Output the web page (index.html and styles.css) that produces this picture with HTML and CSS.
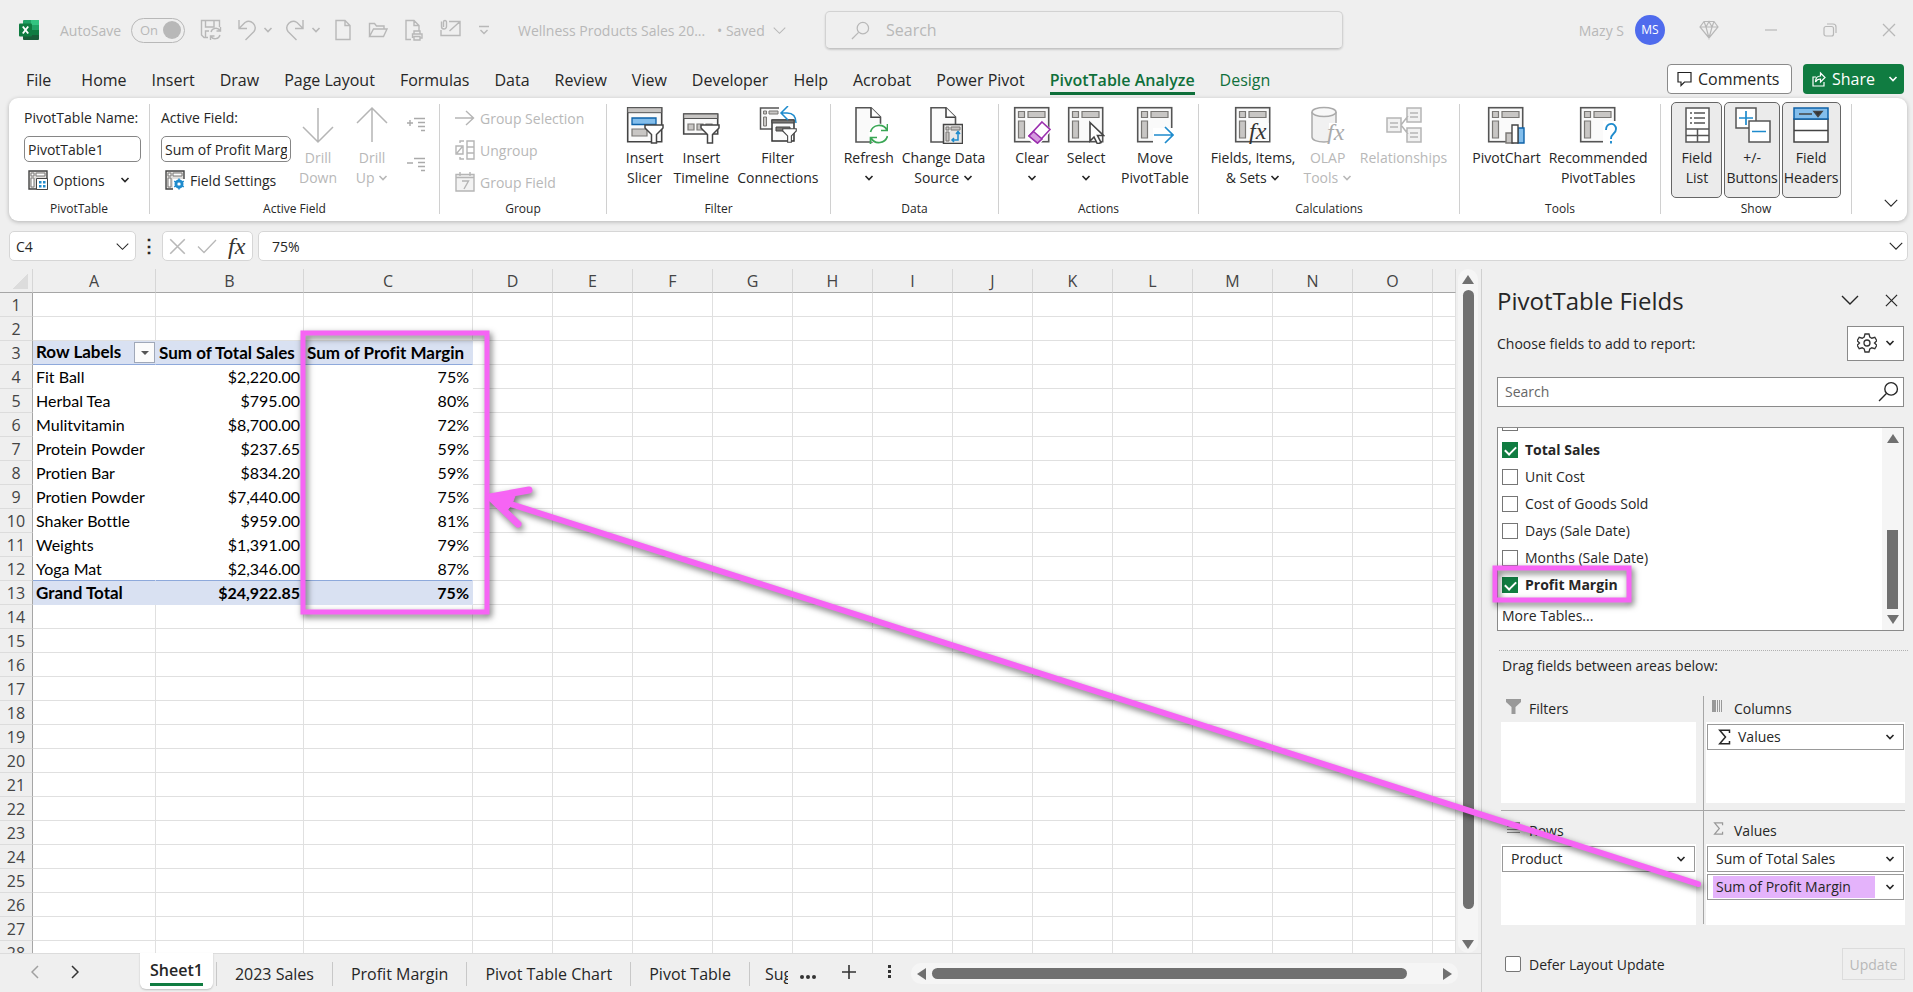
FILE: index.html
```html
<!DOCTYPE html>
<html lang="en">
<head>
    <meta charset="UTF-8">
    <meta name="viewport" content="width=device-width, initial-scale=1.0">
    <title>Wellness Products Sales - Excel</title>
    <link rel="stylesheet" href="styles.css">
</head>
<body>

<!-- Shared icons -->
<svg class="icon-defs" aria-hidden="true">
    <symbol id="chev" viewBox="0 0 10 10"><path d="M1.5 3L5 6.5L8.5 3" fill="none" stroke="currentColor" stroke-width="1.6"/></symbol>
    <symbol id="chev-big" viewBox="0 0 18 18"><path d="M1 5l8 8l8-8" fill="none" stroke="currentColor" stroke-width="1.4"/></symbol>
    <symbol id="pivot" viewBox="0 0 38 38">
        <rect x="1.7" y="1.7" width="34" height="34" fill="#fafafa" stroke="#555" stroke-width="1.6"/>
        <path d="M5.5 5.5h6v6h-6zM15 5.5h17v6H15zM5.5 15h6v17h-6z" fill="#c8c6c4" stroke="#797774" stroke-width="1.2"/>
    </symbol>
    <symbol id="funnel" viewBox="0 0 20 20">
        <path d="M1 1h18v3l-6.500 6.500V19h-5v-8.500L1 4z" fill="#fff" stroke="#444" stroke-width="1.500"/>
    </symbol>
    <symbol id="magnifier" viewBox="0 0 20 20">
        <circle cx="12.500" cy="7.500" r="6" fill="none" stroke="currentColor" stroke-width="1.300"/>
        <path d="M8 12L1 19" stroke="currentColor" stroke-width="1.300"/>
    </symbol>
    <symbol id="cross" viewBox="0 0 14 14"><path d="M1 1l12 12M13 1L1 13" stroke="currentColor" stroke-width="1.300"/></symbol>
    <symbol id="sigma" viewBox="0 0 12 16"><path d="M11 4V1.200H1.200L7 8l-5.800 6.800H11V12" fill="none" stroke="currentColor" stroke-width="1.500"/></symbol>
    <symbol id="page" viewBox="0 0 38 38"><path d="M6 1.700h15l9.500 9.500V36H6z" fill="#fafafa" stroke="#555" stroke-width="1.600"/><path d="M21 1.700v9.500h9.500" fill="#fff" stroke="#444" stroke-width="1.600"/></symbol>
</svg>

<!-- Title bar -->
<header class="title-bar">
    <div class="quick-access">
        <svg class="logo" viewBox="0 0 20 20">
            <path d="M5 0h14a1 1 0 0 1 1 1v4H4V1a1 1 0 0 1 1-1z" fill="#21a366"/><path d="M12 0h7a1 1 0 0 1 1 1v4h-8z" fill="#33c481"/>
            <path d="M4 5h8v5H4z" fill="#107c41"/><path d="M12 5h8v5h-8z" fill="#21a366"/>
            <path d="M4 10h16v9a1 1 0 0 1-1 1H5a1 1 0 0 1-1-1z" fill="#185c37"/><path d="M12 10h8v5h-8z" fill="#107c41"/>
            <rect y="3.500" width="13" height="13" rx="1" fill="#107c41"/>
            <path d="M3.800 6.500l5.400 7M9.200 6.500l-5.400 7" stroke="#fff" stroke-width="1.900"/>
        </svg>
        <span class="autosave">AutoSave</span>
        <button class="toggle" aria-label="AutoSave on">On<span class="knob"></span></button>
        <button class="qa save" aria-label="Save"><svg width="22" height="22" viewBox="0 0 22 22"><path d="M8 18.500H4L1.500 16V1.500h18V8M5.500 1.500V8H14V1.500M5.500 18.500V12H9M11 13a5 5 0 0 1 9-1.500M20.500 8v4h-4M20 16a5 5 0 0 1-9 1.500M10.500 21v-4h4"/></svg></button>
        <button class="qa undo" aria-label="Undo"><svg width="20" height="22" viewBox="0 0 20 22"><path d="M2 1v8.500h8M2.500 9L8 3.500a6.500 6.500 0 0 1 9 9L8.500 21"/></svg><svg class="chev"><use href="#chev"/></svg></button>
        <button class="qa redo" aria-label="Redo"><svg width="20" height="22" viewBox="0 0 20 22"><path d="M18 1v8.500h-8M17.500 9L12 3.500a6.500 6.500 0 0 0-9 9L11.500 21"/></svg><svg class="chev"><use href="#chev"/></svg></button>
        <button class="qa new" aria-label="New"><svg width="16" height="22" viewBox="0 0 16 22"><path d="M1 1.500h9l5 5v14H1zM10 1.500v5h5"/></svg></button>
        <button class="qa open" aria-label="Open"><svg width="20" height="22" viewBox="0 0 20 22"><path d="M1.500 17V4.500h5l2 2.500H16v3M1.500 17.500l4-7.500H19l-3.500 7.500z"/></svg></button>
        <button class="qa print" aria-label="Quick print"><svg width="18" height="22" viewBox="0 0 18 22"><path d="M6 20.500H1v-19h8l5 5V12M9 1.500v5h5M9 15v-3h6v3M7.500 19v-4h9.500v4h-2M9 17.500h6v3.500H9z"/></svg></button>
        <button class="qa mail" aria-label="Email"><svg width="21" height="22" viewBox="0 0 21 22"><path d="M9 2.500h11v14H1V11M20 2.500L9.500 12M1.500 2.500v5a2.500 2.500 0 0 0 5 0V3a1.500 1.500 0 0 0-3 0v5"/></svg></button>
        <button class="qa more" aria-label="Customize"><svg width="10" height="10" viewBox="0 0 10 10"><path d="M0 1.500h10M1.500 5L5 8.500L8.500 5"/></svg></button>
        <span class="doc-name">Wellness Products Sales 20...</span>
        <span class="doc-state">• Saved</span>
        <svg class="chev-saved"><use href="#chev-big"/></svg>
    </div>
    <label class="top-search">
        <svg><use href="#magnifier"/></svg>
        <input type="text" placeholder="Search">
    </label>
    <div class="window-tools">
        <span>Mazy S</span>
        <span class="avatar">MS</span>
        <button class="wt" aria-label="Premium"><svg width="20" height="20" viewBox="0 0 20 20"><path d="M5 1.500h10l4 5.500l-9 11L1 7zM1 7h18M5 1.500L7 7l3 11l3-11l2-5.500M7 7l3-5.500L13 7"/></svg></button>
        <button class="wt" aria-label="Minimize"><svg width="14" height="14" viewBox="0 0 14 14"><path d="M1 7h12"/></svg></button>
        <button class="wt" aria-label="Restore"><svg width="14" height="14" viewBox="0 0 14 14"><rect x="1" y="3.500" width="9.500" height="9.500" rx="2"/><path d="M4 1h6a3 3 0 0 1 3 3v6"/></svg></button>
        <button class="wt" aria-label="Close"><svg width="14" height="14"><use href="#cross"/></svg></button>
    </div>
</header>

<!-- Ribbon tabs -->
<nav class="ribbon-tabs">
    <a href="#">File</a>
    <a href="#">Home</a>
    <a href="#">Insert</a>
    <a href="#">Draw</a>
    <a href="#">Page Layout</a>
    <a href="#">Formulas</a>
    <a href="#">Data</a>
    <a href="#">Review</a>
    <a href="#">View</a>
    <a href="#">Developer</a>
    <a href="#">Help</a>
    <a href="#">Acrobat</a>
    <a href="#">Power Pivot</a>
    <a href="#" class="active">PivotTable Analyze</a>
    <a href="#" class="context">Design</a>
    <button class="comments"><svg width="15" height="16" viewBox="0 0 15 16" fill="none" stroke="#222" stroke-width="1.200"><path d="M1 1.500h13v9.500H7.500L4 14.500V11H1z"/></svg>Comments</button>
    <button class="share"><svg width="14" height="16" viewBox="0 0 14 16" fill="none" stroke="#fff" stroke-width="1.200"><path d="M4 6H1v9h11v-4M3.500 11c0-4 2-6 5-6V2l4.500 4.500L8.500 11V8c-2.500 0-4 1-5 3z"/></svg>Share<svg class="chev"><use href="#chev"/></svg></button>
</nav>

<!-- Ribbon -->
<section class="ribbon">
    <div class="group">
        <div class="group-body">
            <div class="stack">
                <label for="ptName">PivotTable Name:</label>
                <input type="text" id="ptName" class="ribbon-input name" value="PivotTable1">
                <button class="small indent"><svg width="20" height="20" viewBox="0 0 20 20"><path d="M1 1h18v18H1z" fill="#e1dfdd" stroke="#444" stroke-width="1.400"/><path d="M3 3h3v3H3zM8 3h9v3H8zM3 8h3v9H3z" fill="#fff" stroke="#797774"/><path d="M8.500 8.500h11v11h-11z" fill="#fff" stroke="#444"/><path d="M11 11h2.500v2.500H11zM15 11h2.500v2.500H15zM11 15h2.500v2.500H11zM15 15h2.500v2.500H15z" fill="#1e8bcd"/></svg>Options<svg class="chev apart"><use href="#chev"/></svg></button>
            </div>
        </div>
        <div class="group-name">PivotTable</div>
    </div>
    <div class="group">
        <div class="group-body">
            <div class="stack">
                <label for="activeField">Active Field:</label>
                <input type="text" id="activeField" class="ribbon-input field" value="Sum of Profit Margin">
                <button class="small indent"><svg width="20" height="20" viewBox="0 0 20 20"><path d="M1 1h18v18H1z" fill="#e1dfdd" stroke="#444" stroke-width="1.400"/><path d="M3 3h3v3H3zM8 3h9v3H8zM3 8h3v9H3z" fill="#fff" stroke="#797774"/><path d="M8 9h12v11H8z" fill="#fff"/><circle cx="14" cy="14" r="3.300" fill="none" stroke="#1e8bcd" stroke-width="2.400"/><path d="M14 8.500v11M9.200 11.200l9.600 5.600M9.200 16.800l9.600-5.600" stroke="#1e8bcd" stroke-width="1.500"/><circle cx="14" cy="14" r="1.600" fill="#fff"/></svg>Field Settings</button>
            </div>
            <button class="big drill" disabled><svg width="38" height="38" viewBox="0 0 38 38" fill="none" stroke="#b5b5b5" stroke-width="1.500"><path d="M19 2v34M4 21l15 15l15-15"/></svg>Drill<br>Down</button>
            <button class="big drill" disabled><svg width="38" height="38" viewBox="0 0 38 38" fill="none" stroke="#b5b5b5" stroke-width="1.500"><path d="M19 36V2M4 17L19 2l15 15"/></svg>Drill<br>Up <svg class="chev"><use href="#chev"/></svg></button>
            <div class="expand">
                <button disabled aria-label="Expand field"><svg width="18" height="16" viewBox="0 0 18 16" stroke="#aaa" stroke-width="1.400"><path d="M0 6h6M3 3v6M7 1.500h11M11 5.500h7M11 9.500h7M14 13.500h4"/></svg></button>
                <button disabled aria-label="Collapse field"><svg width="18" height="16" viewBox="0 0 18 16" stroke="#aaa" stroke-width="1.400"><path d="M0 6h6M7 1.500h11M11 5.500h7M11 9.500h7M14 13.500h4"/></svg></button>
            </div>
        </div>
        <div class="group-name">Active Field</div>
    </div>
    <div class="group">
        <div class="group-body wide">
            <div class="stack">
                <button class="small" disabled><svg width="20" height="20" viewBox="0 0 20 20" fill="none" stroke="#b5b5b5" stroke-width="1.400"><path d="M0 10h18M11 3l7.500 7l-7.500 7"/></svg>Group Selection</button>
                <button class="small" disabled><svg width="20" height="20" viewBox="0 0 20 20" fill="none" stroke="#b5b5b5" stroke-width="1.400"><path d="M1 6h7v8H1zM2 13l5-6M5 3V1h4M5 17v2h4M12 1h7v18h-7zM12 7h7M12 13h7"/></svg>Ungroup</button>
                <button class="small" disabled><svg width="20" height="20" viewBox="0 0 20 20" fill="#f3f3f3" stroke="#b5b5b5" stroke-width="1.400"><path d="M1 2.500h18V19H1zM1 5.500h18M5 0v4M15 0v4M7 9h6.500L9 17"/></svg>Group Field</button>
            </div>
        </div>
        <div class="group-name">Group</div>
    </div>
    <div class="group">
        <div class="group-body centered nudge">
            <button class="big mid"><svg width="38" height="38" viewBox="0 0 38 38"><path d="M1.700 1.700h34v34h-34z" fill="#fafafa" stroke="#444" stroke-width="1.600"/><path d="M1.700 1.700h34v5h-34z" fill="#c8c6c4" stroke="#555"/><path d="M6 12h24v6.500H6z" fill="#83beec" stroke="#0e62a8" stroke-width="1.300"/><path d="M6 23h15v7H6z" fill="#c8c6c4" stroke="#797774" stroke-width="1.200"/><use href="#funnel" x="18" y="18" width="20" height="20"/></svg>Insert<br>Slicer</button>
            <button class="big"><svg width="38" height="38" viewBox="0 0 38 38"><path d="M1.700 8h34v20h-34z" fill="#fafafa" stroke="#444" stroke-width="1.600"/><path d="M1.700 8h34v4.500h-34z" fill="#c8c6c4" stroke="#555"/><path d="M6 18h6v6H6zM15 18h6v6h-6zM24 18h6v6h-6z" fill="#c8c6c4" stroke="#797774" stroke-width="1.200"/><use href="#funnel" x="18" y="18" width="20" height="20"/></svg>Insert<br>Timeline</button>
            <button class="big"><svg width="38" height="38" viewBox="0 0 38 38"><path d="M1.500 2h22v21h-22z" fill="#fafafa" stroke="#555" stroke-width="1.500"/><path d="M4.500 5h3v3h-3zM10 5h9v3h-9zM4.500 11h3v9h-3z" fill="#c8c6c4" stroke="#797774"/><path d="M20 0h18v14H20z" fill="#fff"/><path d="M13 14h22v21H13z" fill="#fafafa" stroke="#333" stroke-width="1.500"/><path d="M13 14h22v3H13zM17 21h14v4H17z" fill="#797774" stroke="#444"/><path d="M29 0l-7 7l7 7M22 7h6c6 0 9 4 9 10" fill="none" stroke="#1e8bcd" stroke-width="1.500"/><use href="#funnel" x="23" y="22" width="15" height="15"/></svg>Filter<br>Connections</button>
        </div>
        <div class="group-name">Filter</div>
    </div>
    <div class="group">
        <div class="group-body centered">
            <button class="big"><svg width="38" height="38"><use href="#page"/><circle cx="29" cy="28" r="10.500" fill="#fff"/><path d="M20.500 26a9 9 0 0 1 16.500-2M37.500 18v6.500H31M37.500 30a9 9 0 0 1-16.500 2M20.500 38v-6.500H27" fill="none" stroke="#3aa655" stroke-width="1.700"/></svg>Refresh<br><svg class="chev"><use href="#chev"/></svg></button>
            <button class="big"><svg width="38" height="38"><use href="#page"/><path d="M18.500 18.500h19v19h-19z" fill="#e9e8e7" stroke="#444" stroke-width="1.500"/><path d="M21 21h3v3h-3zM26 21h9v3h-9zM21 26h3v9h-3z" fill="#c8c6c4" stroke="#797774"/><path d="M33 25v9h-6M31 28l2-2.500l2 2.500M29 32l-2 2l2 2" fill="none" stroke="#1e8bcd" stroke-width="1.500"/></svg>Change Data<br>Source <svg class="chev"><use href="#chev"/></svg></button>
        </div>
        <div class="group-name">Data</div>
    </div>
    <div class="group">
        <div class="group-body centered nudge">
            <button class="big"><svg width="38" height="38"><use href="#pivot"/><path d="M27 13l12 11l-12 14h-7l-7-7z" fill="#fff"/><path d="M29 16l8 7.500L24.500 37L16 30z" fill="#fff" stroke="#9b2fae" stroke-width="1.600"/><path d="M20.500 25.500l8.500 7.500l-4.500 4L16 30z" fill="#d59adf" stroke="#9b2fae" stroke-width="1.600"/></svg>Clear<br><svg class="chev"><use href="#chev"/></svg></button>
            <button class="big wider"><svg width="38" height="38"><use href="#pivot"/><path d="M23 16.500l13.500 13h-6l3.500 7l-3.500 1.500l-3.500-7l-4 4z" fill="#fff" stroke="#444" stroke-width="1.600"/></svg>Select<br><svg class="chev"><use href="#chev"/></svg></button>
            <button class="big"><svg width="38" height="38"><use href="#pivot"/><path d="M17 22h21v15H17z" fill="#fff"/><path d="M18 29h19M29 21l8 8l-8 8" fill="none" stroke="#1e8bcd" stroke-width="1.700"/></svg>Move<br>PivotTable</button>
        </div>
        <div class="group-name">Actions</div>
    </div>
    <div class="group">
        <div class="group-body centered">
            <button class="big"><svg width="38" height="38"><use href="#pivot"/><path d="M16 17h19v18H16z" fill="#fafafa"/><text x="15" y="33" class="fx">fx</text></svg>Fields, Items,<br>&amp; Sets <svg class="chev"><use href="#chev"/></svg></button>
            <button class="big" disabled><svg width="38" height="38" viewBox="0 0 38 38"><path d="M3 6v25c0 3 5 5 12 5s12-2 12-5V6" fill="#f1f1f1" stroke="#aaa" stroke-width="1.500"/><ellipse cx="15" cy="6" rx="12" ry="4.500" fill="#f8f8f8" stroke="#aaa" stroke-width="1.500"/><path d="M20 17h14v21H20z" fill="#fff"/><text x="18" y="34" class="fx gray">fx</text></svg>OLAP<br>Tools <svg class="chev"><use href="#chev"/></svg></button>
            <button class="big" disabled><svg width="38" height="38" viewBox="0 0 38 38" fill="#f1f1f1" stroke="#b5b5b5" stroke-width="1.500"><path d="M16 19l7-9M16 19l7 9M2 12h14v14H2zM22 2h14v14H22zM22 22h14v14H22zM5 17h8M5 21h8M25 7h8M25 11h8M25 27h8M25 31h8"/></svg>Relationships</button>
        </div>
        <div class="group-name">Calculations</div>
    </div>
    <div class="group">
        <div class="group-body centered">
            <button class="big"><svg width="38" height="38"><use href="#pivot"/><path d="M19 27h7v10h-7z" fill="#c8c6c4" stroke="#797774" stroke-width="1.400"/><path d="M31 22h6v15h-6z" fill="#83beec" stroke="#0e62a8" stroke-width="1.400"/><path d="M25 19h6v18h-6z" fill="#fff" stroke="#444" stroke-width="1.400"/></svg>PivotChart</button>
            <button class="big"><svg width="38" height="38"><use href="#pivot"/><path d="M24 15h14v23H24z" fill="#fff"/><path d="M27 24c0-8 10-8 10-1c0 5-5 4-5 10M32 35v2.500" fill="none" stroke="#1e8bcd" stroke-width="1.900"/></svg>Recommended<br>PivotTables</button>
        </div>
        <div class="group-name">Tools</div>
    </div>
    <div class="group">
        <div class="group-body centered">
            <button class="big pressed"><svg width="38" height="38" viewBox="0 0 38 38" fill="#fff" stroke="#555" stroke-width="1.500"><path d="M8 2h23v34H8zM8 23h23M8 29.500h23M19.500 23v13"/><path d="M12 7h2M16 7h11M12 12h2M16 12h11M12 17h2M16 17h11"/></svg>Field<br>List</button>
            <button class="big pressed"><svg width="38" height="38" viewBox="0 0 38 38" fill="#fff" stroke="#555" stroke-width="1.500"><path d="M3 2h20v20H3z"/><path d="M16 15h21v21H16z"/><path d="M6 12h14M13 5v14M19 25.500h14" stroke="#1e8bcd" stroke-width="1.700"/></svg>+/-<br>Buttons</button>
            <button class="big pressed"><svg width="38" height="38" viewBox="0 0 38 38" fill="#fff" stroke="#444" stroke-width="1.500"><path d="M2 13h34v23H2zM2 24.500h34"/><path d="M2 2h34v11H2z" fill="#83beec" stroke="#0e62a8"/><path d="M7 8h13"/><path d="M22 5.500h8L26 10.500z" fill="#333"/></svg>Field<br>Headers</button>
        </div>
        <div class="group-name">Show</div>
    </div>
    <button class="collapse" aria-label="Collapse ribbon"><svg width="14" height="14"><use href="#chev-big"/></svg></button>
</section>

<!-- Formula bar -->
<div class="formula-bar">
    <div class="name-box">
        <input type="text" value="C4" aria-label="Name box">
        <svg width="13" height="13"><use href="#chev-big"/></svg>
    </div>
    <span class="dots">⋮</span>
    <div class="fx-box">
        <svg width="17" height="17"><use href="#cross"/></svg>
        <svg width="20" height="15" viewBox="0 0 20 15"><path d="M1 7.500l6 6L19 1" fill="none" stroke="currentColor" stroke-width="1.300"/></svg>
        <button aria-label="Insert function">fx</button>
    </div>
    <div class="formula">
        <input type="text" value="75%" aria-label="Formula">
        <svg width="14" height="14"><use href="#chev-big"/></svg>
    </div>
</div>

<main class="workspace">
    <section class="sheet">
        <div class="sheet-top">
            <div class="grid-wrap">
                <table class="grid">
                    <colgroup>
                        <col class="c-head"><col class="c-a"><col class="c-b"><col class="c-c">
                        <col class="c-std"><col class="c-std"><col class="c-std"><col class="c-std"><col class="c-std"><col class="c-std">
                        <col class="c-std"><col class="c-std"><col class="c-std"><col class="c-std"><col class="c-std"><col class="c-std"><col>
                    </colgroup>
                    <thead><tr id="colHeads"></tr></thead>
                    <tbody id="gridBody"></tbody>
                </table>
            </div>
            <div class="v-scroll"><span class="arrow up"></span><span class="thumb"></span><span class="arrow down"></span></div>
        </div>
        <div class="sheet-tabs">
            <button class="nav" aria-label="Previous sheet"><svg width="8" height="14" viewBox="0 0 8 14"><path d="M7 1L1 7l6 6" fill="none" stroke="#a0a0a0" stroke-width="1.500"/></svg></button>
            <button class="nav next" aria-label="Next sheet"><svg width="8" height="14" viewBox="0 0 8 14"><path d="M1 1l6 6l-6 6" fill="none" stroke="#333" stroke-width="1.500"/></svg></button>
            <a href="#" class="tab current"><span>Sheet1</span></a>
            <a href="#" class="tab">2023 Sales</a>
            <a href="#" class="tab">Profit Margin</a>
            <a href="#" class="tab">Pivot Table Chart</a>
            <a href="#" class="tab">Pivot Table</a>
            <a href="#" class="tab cut">Sug</a>
            <button class="tab-btn" aria-label="More sheets"><svg width="16" height="4" fill="#333"><circle cx="2" cy="2" r="2"/><circle cx="8" cy="2" r="2"/><circle cx="14" cy="2" r="2"/></svg></button>
            <button class="tab-btn" aria-label="New sheet"><svg width="14" height="14"><path d="M7 0v14M0 7h14" stroke="#333" stroke-width="1.600"/></svg></button>
            <button class="tab-btn" aria-label="Resize"><svg width="4" height="14" fill="#333"><path d="M0 0h3v3H0zM0 5h3v3H0zM0 10h3v3H0z"/></svg></button>
            <div class="h-scroll"><span class="arrow left"></span><span class="thumb"></span><span class="arrow right"></span></div>
        </div>
    </section>

    <!-- PivotTable Fields pane -->
    <aside class="pane">
        <div class="pane-head">
            <h2>PivotTable Fields</h2>
            <button aria-label="Pane options"><svg width="18" height="18"><use href="#chev-big"/></svg></button>
            <button aria-label="Close pane"><svg width="13" height="13"><use href="#cross"/></svg></button>
        </div>
        <div class="choose">
            <span>Choose fields to add to report:</span>
            <button class="gear" aria-label="Tools"><svg width="20" height="20" viewBox="0 0 20 20" fill="none" stroke="#333" stroke-width="1.300"><path d="M8 1h4l.8 3l2 1.200l3-.9l2 3.500L17.500 10l2.300 2.200l-2 3.500l-3-.9l-2 1.200l-.8 3H8l-.8-3l-2-1.200l-3 .9l-2-3.500L2.500 10L.2 7.800l2-3.500l3 .9l2-1.200z"/><circle cx="10" cy="10" r="3"/></svg><svg class="chev"><use href="#chev"/></svg></button>
        </div>
        <label class="field-search">
            <input type="text" placeholder="Search">
            <svg width="21" height="21"><use href="#magnifier"/></svg>
        </label>
        <div class="field-list">
            <div class="fields">
                <label><input type="checkbox" aria-label="Sales price"></label>
                <label class="on"><input type="checkbox" checked>Total Sales</label>
                <label><input type="checkbox">Unit Cost</label>
                <label><input type="checkbox">Cost of Goods Sold</label>
                <label><input type="checkbox">Days (Sale Date)</label>
                <label><input type="checkbox">Months (Sale Date)</label>
                <label class="on"><input type="checkbox" checked>Profit Margin</label>
                <a href="#">More Tables...</a>
            </div>
            <div class="list-scroll"><span class="arrow up"></span><span class="thumb"></span><span class="arrow down"></span></div>
        </div>
        <p class="drag">Drag fields between areas below:</p>
        <div class="areas">
            <div class="area">
                <h3><svg width="15" height="15" viewBox="0 0 15 15" fill="#999"><path d="M0 0h15v3L9.500 8v7h-4V8L0 3z"/></svg>Filters</h3>
                <div class="drop"></div>
            </div>
            <div class="area">
                <h3><svg width="15" height="15" viewBox="0 0 15 15" fill="#999"><path d="M1 1h4v12H1zM6 1h1v12H6zM8 1h1v12H8zM10 1h1v12h-1z"/></svg>Columns</h3>
                <div class="drop"><button class="item"><svg class="sum"><use href="#sigma"/></svg><span>Values</span><svg class="chev"><use href="#chev"/></svg></button></div>
            </div>
            <div class="area">
                <h3><svg width="15" height="15" viewBox="0 0 15 15" fill="#888"><path d="M1 1h13v2H1zM1 5h13v1H1zM1 8h13v1H1zM1 11h13v1H1z"/></svg>Rows</h3>
                <div class="drop"><button class="item"><span>Product</span><svg class="chev"><use href="#chev"/></svg></button></div>
            </div>
            <div class="area">
                <h3><svg width="15" height="13" class="sum-head"><use href="#sigma"/></svg>Values</h3>
                <div class="drop">
                    <button class="item"><span>Sum of Total Sales</span><svg class="chev"><use href="#chev"/></svg></button>
                    <button class="item"><span class="marked">Sum of Profit Margin</span><svg class="chev"><use href="#chev"/></svg></button>
                </div>
            </div>
        </div>
        <div class="pane-foot">
            <label><input type="checkbox">Defer Layout Update</label>
            <button disabled>Update</button>
        </div>
    </aside>
</main>

<!-- Callouts over the sheet and pane -->
<svg class="callouts" width="1913" height="992" fill="none" stroke="#f664f4">
    <rect x="303" y="333" width="184" height="279" stroke-width="5"/>
    <rect x="1495" y="568" width="134" height="32" stroke-width="5"/>
    <path d="M492 498L1698 884" stroke-width="6" stroke-linecap="round"/>
    <path d="M529 490L490 497L518 524" stroke-width="7" stroke-linecap="round" stroke-linejoin="round"/>
    <path d="M490 497l26-4l-4 11l-6 8z" fill="#f664f4"/>
</svg>

<script>
    const pivotRows = {
        3: ["Row Labels", "Sum of Total Sales", "Sum of Profit Margin"],
        4: ["Fit Ball", "$2,220.00", "75%"],
        5: ["Herbal Tea", "$795.00", "80%"],
        6: ["Mulitvitamin", "$8,700.00", "72%"],
        7: ["Protein Powder", "$237.65", "59%"],
        8: ["Protien Bar", "$834.20", "59%"],
        9: ["Protien Powder", "$7,440.00", "75%"],
        10: ["Shaker Bottle", "$959.00", "81%"],
        11: ["Weights", "$1,391.00", "79%"],
        12: ["Yoga Mat", "$2,346.00", "87%"],
        13: ["Grand Total", "$24,922.85", "75%"]
    };

    // Column letters
    let heads = '<th class="corner"></th>';
    for (const letter of "ABCDEFGHIJKLMNO") {
        heads += `<th>${letter}</th>`;
    }
    document.getElementById("colHeads").innerHTML = heads + "<th></th>";

    // Rows 1 to 28
    const body = document.getElementById("gridBody");
    for (let r = 1; r <= 28; r++) {
        const row = body.insertRow();
        if (pivotRows[r]) {
            row.className = r === 3 ? "pivot head" : r === 13 ? "pivot total" : "pivot";
        }
        row.innerHTML = `<th>${r}</th>`;
        for (let c = 0; c < 16; c++) {
            const cell = row.insertCell();
            if (pivotRows[r] && c < 3) {
                cell.textContent = pivotRows[r][c];
                cell.className = "p" + c;
            }
        }
    }
    body.querySelector(".head .p0").innerHTML += '<button class="filter-btn" aria-label="Filter row labels"></button>';
</script>

</body>
</html>
```
FILE: styles.css
```css
* {
    box-sizing: border-box;
}
body {
    margin: 0;
    height: 100vh;
    display: flex;
    flex-direction: column;
    overflow: hidden;
    background-color: #efefef;
    color: #262626;
    font-family: "Open Sans", "Noto Sans", sans-serif;
    font-size: 14px;
}
button, input {
    font: inherit;
    color: inherit;
}
button {
    background: none;
    border: none;
    padding: 0;
}
a {
    color: inherit;
    text-decoration: none;
}
.icon-defs {
    position: absolute;
    width: 0;
    height: 0;
}
.chev {
    width: 10px;
    height: 10px;
    flex: none;
}
.chev-saved {
    width: 13px;
    height: 13px;
}

/* Title bar */
.title-bar {
    flex: none;
    height: 60px;
    display: grid;
    grid-template-columns: 825px minmax(200px, 518px) 1fr;
    align-items: center;
    color: #b8b8b8;
}
.quick-access {
    display: flex;
    align-items: center;
    padding-left: 19px;
}
.logo {
    width: 20px;
    height: 20px;
    margin-right: 21px;
}
.autosave {
    width: 71px;
}
.toggle {
    display: flex;
    align-items: center;
    justify-content: space-between;
    width: 54px;
    height: 25px;
    padding: 0 3px 0 8px;
    border: 1px solid #b8b8b8;
    border-radius: 13px;
    font-size: 13px;
}
.knob {
    width: 18px;
    height: 18px;
    border-radius: 50%;
    background-color: #b8b8b8;
}
.qa {
    display: flex;
    align-items: center;
    gap: 6px;
    margin-left: 15px;
}
.qa > svg:not(.chev) {
    fill: none;
    stroke: #b8b8b8;
    stroke-width: 1.4;
}
.qa.redo {
    margin-left: 12px;
}
.qa.new {
    margin-left: 14px;
}
.qa.open, .qa.print, .qa.mail {
    margin-left: 17px;
}
.qa.more {
    margin: 0 29px 0 18px;
}
.doc-name {
    width: 199px;
    white-space: nowrap;
}
.doc-state {
    width: 56px;
}
.top-search {
    display: flex;
    align-items: center;
    height: 38px;
    padding-left: 25px;
    border: 1px solid #d2d2d2;
    border-bottom-color: #c4c4c4;
    border-radius: 5px;
    box-shadow: 0 1px 2px rgba(0, 0, 0, 0.15);
}
.top-search svg {
    width: 19px;
    height: 19px;
    margin-right: 14px;
}
.top-search input {
    flex: 1;
    border: none;
    background: none;
    outline: none;
    font-size: 16px;
}
.top-search input::placeholder {
    color: #b8b8b8;
}
.window-tools {
    display: flex;
    align-items: center;
    justify-content: flex-end;
    padding-right: 17px;
}
.avatar {
    width: 30px;
    height: 30px;
    margin: 0 34px 0 11px;
    border-radius: 50%;
    background-color: #4f6bed;
    color: #fff;
    font-size: 12px;
    line-height: 30px;
    text-align: center;
}
.wt {
    display: flex;
    margin-right: 45px;
}
.wt:last-child {
    margin-right: 0;
}
.wt svg {
    fill: none;
    stroke: #b8b8b8;
    stroke-width: 1.2;
}

/* Ribbon tabs */
.ribbon-tabs {
    flex: none;
    height: 38px;
    display: flex;
    align-items: flex-start;
    gap: 25px;
    padding: 4px 9px 0 26px;
    font-size: 16px;
}
.ribbon-tabs a {
    height: 31px;
    line-height: 32px;
    white-space: nowrap;
}
.ribbon-tabs a:first-child {
    margin-right: 5px;
}
.ribbon-tabs .active {
    color: #0f703b;
    font-weight: 600;
    border-bottom: 3px solid #0f703b;
}
.ribbon-tabs .context {
    color: #0f703b;
}
.comments, .share {
    display: flex;
    align-items: center;
    height: 30px;
    gap: 6px;
    border-radius: 4px;
}
.comments {
    width: 125px;
    padding-left: 9px;
    margin-left: auto;
    background-color: #fff;
    border: 1px solid #8a8a8a;
}
.share {
    width: 101px;
    padding-left: 9px;
    margin-left: -14px;
    background-color: #107c41;
    color: #fff;
}
.share .chev {
    margin-left: 7px;
}

/* Ribbon */
.ribbon {
    flex: none;
    display: grid;
    grid-template-columns: 141px 290px 167px 224px 168px 200px 261px 201px 191px 1fr;
    height: 123px;
    margin: 0 6px 0 9px;
    padding: 6px 0 7px;
    background-color: #fff;
    border-radius: 9px;
    box-shadow: 0 1px 4px rgba(0, 0, 0, 0.25);
}
.group {
    display: flex;
    flex-direction: column;
    border-right: 1px solid #d0d0d0;
}
.group-body {
    flex: 1;
    display: flex;
    padding-left: 5px;
}
.group-body.wide {
    padding-left: 11px;
}
.group-body.centered {
    padding-left: 0;
    justify-content: center;
}
.group-body.nudge {
    padding-left: 5px;
}
.group-name {
    height: 17px;
    margin-bottom: -4px;
    font-size: 12px;
    line-height: 16px;
    text-align: center;
}
.stack {
    display: flex;
    flex-direction: column;
}
.stack label {
    height: 27px;
    line-height: 27px;
    padding-left: 6px;
}
.group:first-child .group-body {
    padding-left: 9px;
}
.ribbon-input {
    height: 26px;
    margin: 5px 0 4px 6px;
    padding: 0 3px;
    border: 1px solid #868686;
    border-radius: 5px;
    background-color: #fff;
}
.ribbon-input.name {
    width: 117px;
}
.ribbon-input.field {
    width: 130px;
}
.small {
    display: flex;
    align-items: center;
    gap: 5px;
    height: 28px;
    margin-bottom: 4px;
    padding-left: 4px;
    white-space: nowrap;
}
.small.indent {
    padding-left: 10px;
}
.apart {
    margin-left: 10px;
}
button:disabled {
    color: #b8b8b8;
}
.big {
    align-self: flex-start;
    min-width: 44px;
    margin-top: -2px;
    padding: 4px 4px 0;
    line-height: 20px;
    border-radius: 5px;
    white-space: nowrap;
}
.big > svg:first-child {
    display: block;
    margin: 0 auto 4px;
}
.big.mid {
    min-width: 50px;
}
.big.wider {
    min-width: 62px;
}
.big.drill {
    width: 46px;
    margin-left: 4px;
    margin-right: 4px;
}
.big.pressed {
    min-width: 51px;
    margin-right: 2px;
    padding: 3px 1px 9px;
    border: 1px solid #666;
    background-color: #ebebeb;
}
.big.pressed:last-child {
    margin-right: 0;
}
.fx {
    font: italic 24px "Liberation Serif", serif;
    fill: #333;
}
.fx.gray {
    fill: #aaa;
}
.expand {
    display: flex;
    flex-direction: column;
    gap: 24px;
    padding: 13px 0 0 8px;
}
.expand svg {
    display: block;
}
.collapse {
    align-self: end;
    justify-self: end;
    margin: 0 9px 0 0;
}

/* Formula bar */
.formula-bar {
    flex: none;
    display: flex;
    height: 30px;
    margin: 10px 5px 8px 9px;
    font-size: 15px;
}
.name-box, .fx-box, .formula {
    display: flex;
    align-items: center;
    background-color: #fff;
    border: 1px solid #d6d6d6;
    border-radius: 5px;
}
.name-box {
    width: 127px;
    padding: 0 6px;
}
.name-box input, .formula input {
    flex: 1;
    min-width: 0;
    border: none;
    outline: none;
    padding: 0;
    font-size: 14px;
}
.dots {
    width: 26px;
    text-align: center;
    font-size: 18px;
    font-weight: 700;
    line-height: 28px;
}
.fx-box {
    width: 91px;
    padding: 0 6px;
    gap: 11px;
    color: #b8b8b8;
}
.fx-box button {
    color: #333;
    font: italic 24px "Liberation Serif", serif;
}
.formula {
    flex: 1;
    margin-left: 5px;
    padding: 0 4px 0 13px;
}

/* Worksheet */
.workspace {
    flex: 1;
    min-height: 0;
    display: flex;
}
.sheet {
    flex: 1;
    min-width: 0;
    display: flex;
    flex-direction: column;
}
.sheet-top {
    flex: 1;
    min-height: 0;
    display: flex;
}
.grid-wrap {
    flex: 1;
    min-width: 0;
    overflow: hidden;
}
.grid {
    width: 100%;
    table-layout: fixed;
    border-collapse: separate;
    border-spacing: 0;
    line-height: 20px;
}
.c-head { width: 33px; }
.c-a { width: 123px; }
.c-b { width: 148px; }
.c-c { width: 169px; }
.c-std { width: 80px; }
.grid th, .grid td {
    height: 24px;
    padding: 0;
}
.grid th {
    font-weight: 400;
    font-size: 16px;
    color: #444;
    border-bottom: 1px solid #dcdcdc;
}
.grid thead th {
    border-right: 1px solid #d6d6d6;
    border-bottom: 1px solid #a6a6a6;
}
.grid tbody th {
    border-right: 1px solid #a6a6a6;
}
.grid .corner {
    background: linear-gradient(135deg, transparent 50%, #dcdcdc 50%) no-repeat right 4px bottom 3px / 15px 15px;
}
.grid td {
    background-color: #fff;
    border-right: 1px solid #e0e0e0;
    border-bottom: 1px solid #e0e0e0;
    font-family: Lato, sans-serif;
    font-size: 16px;
    font-variant-ligatures: none;
    color: #000;
    white-space: nowrap;
}
.grid .p0, .grid .p1, .grid .p2 {
    border-color: #fff;
    text-align: right;
    padding-right: 3px;
}
.grid .p0 {
    padding: 0 0 0 3px;
    text-align: left;
}
.grid .head td, .grid .total td {
    font-weight: 700;
}
.grid .head td {
    text-align: left;
    padding: 0 0 0 3px;
}
.grid .head td, .grid .total .p0 {
    font-size: 17px;
}
.grid .head .p0, .grid .head .p1, .grid .head .p2,
.grid .total .p0, .grid .total .p1, .grid .total .p2 {
    background-color: #d9e1f2;
    border-color: #d9e1f2;
}
.grid .head .p0, .grid .head .p1, .grid .head .p2,
.grid tr:nth-child(12) .p0, .grid tr:nth-child(12) .p1, .grid tr:nth-child(12) .p2 {
    border-bottom-color: #8ea9db;
}
.filter-btn {
    float: right;
    width: 21px;
    height: 21px;
    border: 1px solid #a0a8b8;
    background-color: #fbfbfb;
    display: flex;
    align-items: center;
    justify-content: center;
}
.filter-btn::after {
    content: "";
    border: 4px solid transparent;
    border-top-color: #555;
    border-bottom: 0;
}

/* Scroll bars */
.arrow {
    width: 0;
    height: 0;
    border: 6px solid transparent;
}
.arrow.up {
    border-top: 0;
    border-bottom: 9px solid #707070;
}
.arrow.down {
    border-bottom: 0;
    border-top: 9px solid #707070;
}
.arrow.left {
    border-left: 0;
    border-right: 9px solid #707070;
}
.arrow.right {
    border-right: 0;
    border-left: 9px solid #707070;
}
.thumb {
    background-color: #707070;
}
.v-scroll {
    flex: none;
    width: 20px;
    margin: 0 3px 0 2px;
    padding: 6px 0 4px;
    display: flex;
    flex-direction: column;
    align-items: center;
    background-color: #f5f5f5;
    border-radius: 10px;
}
.v-scroll .thumb {
    flex: 1;
    width: 11px;
    margin: 6px 0 31px;
    border-radius: 6px;
}
.h-scroll {
    flex: 1;
    display: flex;
    align-items: center;
    height: 21px;
    margin: 9px 23px 0 0;
    padding: 0 6px;
    background-color: #f5f5f5;
    border-radius: 10px;
}
.h-scroll .thumb {
    flex: 1;
    height: 11px;
    margin: 0 36px 0 6px;
    border-radius: 6px;
}

/* Sheet tabs */
.sheet-tabs {
    flex: none;
    display: flex;
    height: 39px;
    padding-left: 30px;
    border-top: 1px solid #dcdcdc;
    font-size: 16px;
}
.nav {
    width: 10px;
    height: 37px;
    margin-right: 30px;
}
.nav.next {
    margin-right: 60px;
}
.tab {
    height: 24px;
    margin-top: 8px;
    padding: 0 18px;
    line-height: 24px;
    border-right: 1px solid #c8c8c8;
    white-space: nowrap;
}
.tab.current {
    height: 36px;
    margin: -1px 3px 0 0;
    padding: 0 10px;
    background-color: #fff;
    border: none;
    border-radius: 0 0 6px 6px;
    box-shadow: 0 1px 2px rgba(0, 0, 0, 0.2);
    font-weight: 600;
}
.tab.current span {
    display: block;
    height: 33px;
    line-height: 34px;
    border-bottom: 3px solid #107c41;
}
.tab.current + .tab {
    border-left: 1px solid #c8c8c8;
}
.tab.cut {
    width: 38px;
    padding: 0 0 0 15px;
    border: none;
    overflow: hidden;
}
.tab-btn {
    width: 41px;
    height: 37px;
}

/* Fields pane */
.pane {
    flex: none;
    width: 432px;
    padding: 9px 9px 0 15px;
    border-left: 1px solid #d0d0d0;
}
.pane-head {
    display: flex;
    align-items: center;
    height: 44px;
}
.pane-head h2 {
    flex: 1;
    margin: 0;
    font-size: 24px;
    font-weight: 400;
}
.pane-head button {
    display: flex;
    margin-right: 6px;
}
.pane-head button:nth-child(2) {
    margin-right: 26px;
}
.choose {
    display: flex;
    align-items: center;
    justify-content: space-between;
    height: 34px;
    margin-top: 4px;
}
.gear {
    display: flex;
    align-items: center;
    justify-content: center;
    gap: 8px;
    width: 57px;
    height: 35px;
    background-color: #fff;
    border: 1px solid #8a8a8a;
}
.field-search {
    display: flex;
    align-items: center;
    height: 30px;
    margin: 17px 0 20px;
    padding: 0 4px 1px 7px;
    background-color: #fff;
    border: 1px solid #8a8a8a;
}
.field-search input {
    flex: 1;
    border: none;
    outline: none;
    padding: 0;
}
.field-search input::placeholder {
    color: #666;
}
.field-list {
    display: flex;
    height: 204px;
    background-color: #fff;
    border: 1px solid #8a8a8a;
}
.fields {
    flex: 1;
    display: flex;
    flex-direction: column;
    justify-content: flex-end;
    overflow: hidden;
    padding-left: 4px;
}
.fields label, .pane-foot label {
    display: flex;
    align-items: center;
    flex: none;
    gap: 7px;
    height: 27px;
}
.fields .on {
    font-weight: 700;
}
.fields a {
    flex: none;
    height: 32px;
    line-height: 36px;
}
input[type="checkbox"] {
    appearance: none;
    flex: none;
    width: 16px;
    height: 16px;
    margin: 0;
    border: 1px solid #767676;
    background-color: #fff;
}
input[type="checkbox"]:checked {
    display: flex;
    justify-content: center;
    background-color: #107c41;
    border-color: #107c41;
}
input[type="checkbox"]:checked::after {
    content: "";
    width: 9px;
    height: 5px;
    margin-top: 3px;
    border: solid #fff;
    border-width: 0 0 2px 2px;
    transform: rotate(-45deg);
}
.list-scroll {
    display: flex;
    flex-direction: column;
    align-items: center;
    width: 21px;
    padding: 6px 0;
    background-color: #f5f5f5;
}
.list-scroll .thumb {
    width: 11px;
    height: 79px;
    margin: auto 0 6px;
}
.drag {
    margin: 19px -4px 0 2px;
    padding: 5px 0 0 3px;
    height: 46px;
    border-top: 1px dotted #b0b0b0;
}
.areas {
    display: grid;
    grid-template-columns: 1fr 1fr;
    margin: 0 -1px 0 4px;
}
.area {
    height: 114px;
    padding-right: 7px;
}
.area:nth-child(even) {
    padding: 0 0 0 2px;
    border-left: 1px solid #a6a6a6;
}
.area:nth-child(n+3) {
    border-top: 1px solid #a6a6a6;
    padding-top: 7px;
}
.area h3 {
    display: flex;
    align-items: center;
    gap: 8px;
    height: 24px;
    margin: 0 0 2px;
    padding-left: 5px;
    font-size: 14px;
    font-weight: 400;
}
.area h3 svg {
    margin-top: -4px;
}
.sum-head {
    color: #999;
}
.drop {
    height: 81px;
    padding: 2px 1px;
    background-color: #fff;
}
.item {
    display: flex;
    align-items: center;
    width: 100%;
    height: 26px;
    margin-bottom: 2px;
    padding: 0 8px 0 5px;
    border: 1px solid #999;
    text-align: left;
}
.item span {
    flex: 1;
    height: 22px;
    line-height: 22px;
    margin-right: 10px;
    padding-left: 3px;
}
.item .marked {
    background-color: #e4b3fb;
}
.sum {
    width: 13px;
    height: 16px;
    margin: 0 4px 0 5px;
}
.pane-foot {
    display: flex;
    justify-content: space-between;
    align-items: center;
    margin: 24px -1px 0 8px;
}
.pane-foot label {
    gap: 8px;
}
.pane-foot input[type="checkbox"] {
    border-radius: 2px;
}
.pane-foot button {
    width: 63px;
    height: 32px;
    border: 1px solid #dcdcdc;
}

/* Callouts */
.callouts {
    position: absolute;
    top: 0;
    left: 0;
    pointer-events: none;
    filter: drop-shadow(2px 3px 3px rgba(0, 0, 0, 0.55));
}
```
